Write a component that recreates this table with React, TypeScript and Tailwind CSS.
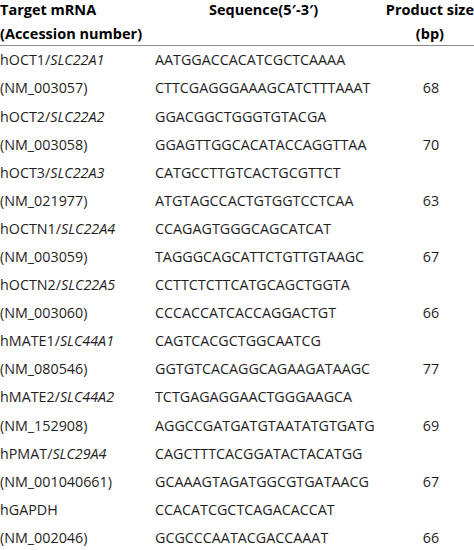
import React from "react";

type Row = { name: React.ReactNode; seq: string; size?: string };

const genes: [string, string | null, string, string, string, string][] = [
  ["hOCT1/", "SLC22A1", "NM_003057", "AATGGACCACATCGCTCAAAA", "CTTCGAGGGAAAGCATCTTTAAAT", "68"],
  ["hOCT2/", "SLC22A2", "NM_003058", "GGACGGCTGGGTGTACGA", "GGAGTTGGCACATACCAGGTTAA", "70"],
  ["hOCT3/", "SLC22A3", "NM_021977", "CATGCCTTGTCACTGCGTTCT", "ATGTAGCCACTGTGGTCCTCAA", "63"],
  ["hOCTN1/", "SLC22A4", "NM_003059", "CCAGAGTGGGCAGCATCAT", "TAGGGCAGCATTCTGTTGTAAGC", "67"],
  ["hOCTN2/", "SLC22A5", "NM_003060", "CCTTCTCTTCATGCAGCTGGTA", "CCCACCATCACCAGGACTGT", "66"],
  ["hMATE1/", "SLC44A1", "NM_080546", "CAGTCACGCTGGCAATCG", "GGTGTCACAGGCAGAAGATAAGC", "77"],
  ["hMATE2/", "SLC44A2", "NM_152908", "TCTGAGAGGAACTGGGAAGCA", "AGGCCGATGATGTAATATGTGATG", "69"],
  ["hPMAT/", "SLC29A4", "NM_001040661", "CAGCTTTCACGGATACTACATGG", "GCAAAGTAGATGGCGTGATAACG", "67"],
  ["hGAPDH", null, "NM_002046", "CCACATCGCTCAGACACCAT", "GCGCCCAATACGACCAAAT", "66"],
];

const rows: Row[] = [];
genes.forEach(([a, b, acc, s1, s2, size]) => {
  rows.push({
    name: (
      <>
        {a}
        {b && <i>{b}</i>}
      </>
    ),
    seq: s1,
  });
  rows.push({ name: `(${acc})`, seq: s2, size });
});

export default function App() {
  return (
    <div
      className="w-[474px] h-[550px] bg-white text-[#1e1e1e] overflow-hidden"
      style={{ fontFamily: '"Open Sans", "Noto Sans", sans-serif' }}
    >
      <div className="h-[46px] flex text-[14.5px] font-bold text-black border-b border-[#8a8a8a]">
        <div className="w-[155px] whitespace-nowrap">
          <div className="leading-[20px]">Target mRNA</div>
          <div className="leading-[28px]">(Accession number)</div>
        </div>
        <div className="w-[233px] pl-[55px] leading-[20px]">Sequence(5′-3′)</div>
        <div className="flex-1 text-center whitespace-nowrap">
          <div className="leading-[20px]">Product size</div>
          <div className="leading-[28px]">(bp)</div>
        </div>
      </div>
      {rows.map((r, i) => (
        <div key={i} className="flex h-[28.1px] items-center text-[14.3px]">
          <div className="w-[155px] whitespace-nowrap">{r.name}</div>
          <div className="w-[233px] whitespace-nowrap">{r.seq}</div>
          <div className="flex-1 text-center">{r.size}</div>
        </div>
      ))}
    </div>
  );
}
